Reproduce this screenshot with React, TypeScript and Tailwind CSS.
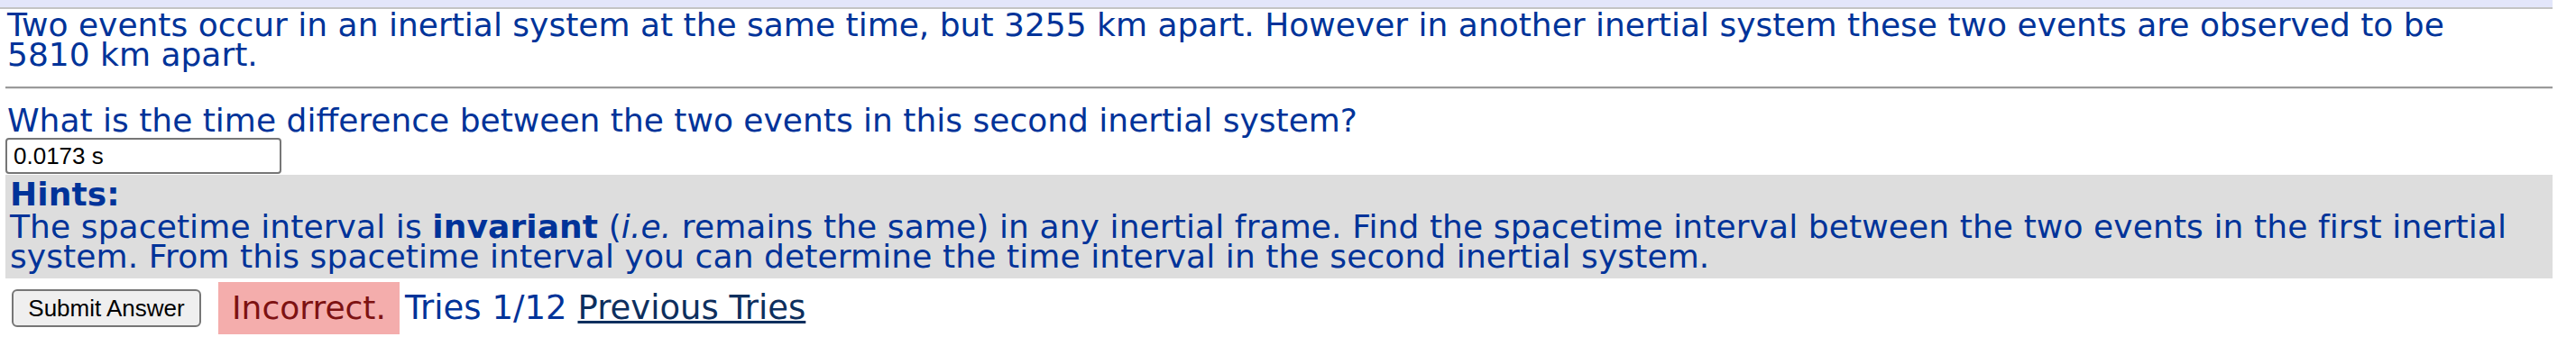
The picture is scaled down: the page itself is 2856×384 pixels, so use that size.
import React from "react";

export default function App() {
  const blue = "text-[#003399]";
  return (
    <div className="w-[2856px] h-[384px] bg-white overflow-hidden font-['DejaVu_Sans',Verdana,sans-serif]">
      <div className="w-[2830px] h-[10px] bg-[#e3e6fa] border-b-2 border-[#c4c4c4]" />
      <div className="ml-[6px] w-[2824px]">
        <div className={`${blue} text-[36px] leading-[33px] pl-[2px] pr-[40px] pt-[1px]`}>
          Two events occur in an inertial system at the same time, but 3255 km apart. However in another inertial system these two events are observed to be 5810 km apart.
        </div>
        <div className="mt-[19px] h-[3px] border-t-2 border-[#9a9a9a] border-b border-b-[#e6e6e6]" />
        <div className={`${blue} text-[36px] leading-[33px] pl-[2px] mt-[18px]`}>
          What is the time difference between the two events in this second inertial system?
        </div>
        <div className="mt-[3px] w-[306px] h-[40px] border-2 border-[#767676] rounded-[4px] flex items-center px-[7px] font-['Liberation_Sans',Arial,sans-serif] text-[26px] text-black">
          0.0173 s
        </div>
        <div className={`mt-[1px] bg-[#dddddd] ${blue} text-[36px] leading-[33px] tracking-[0.1px] pl-[5px] pt-[5px] pb-[8px]`}>
          <div className="font-bold">Hints:</div>
          <div className="mt-[3px]">
            The spacetime interval is <b>invariant</b> (<i>i.e.</i> remains the same) in any inertial frame. Find the spacetime interval between the two events in the first inertial system. From this spacetime interval you can determine the time interval in the second inertial system.
          </div>
        </div>
        <div className="flex items-center mt-[4px]">
          <div className="ml-[7px] w-[210px] h-[42px] border-2 border-[#767676] rounded-[6px] bg-[#efefef] flex items-center justify-center font-['Liberation_Sans',Arial,sans-serif] text-[26px] text-black">
            Submit Answer
          </div>
          <div className="ml-[19px] h-[58px] px-[15px] bg-[#f4adac] text-[#7d1212] text-[36px] flex items-center">
            Incorrect.
          </div>
          <div className={`ml-[6px] ${blue} text-[37px]`}>Tries 1/12</div>
          <div className="ml-[12px] text-[37px] text-[#0d2f5e] underline">Previous Tries</div>
        </div>
      </div>
    </div>
  );
}
